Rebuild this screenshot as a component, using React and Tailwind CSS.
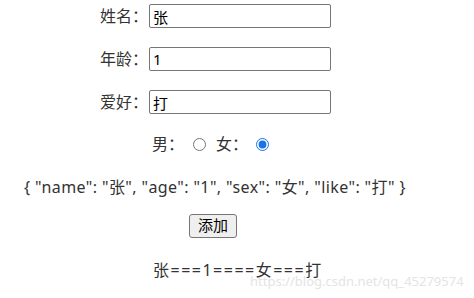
import { useState } from "react";

const font = { fontFamily: '"Noto Sans", "Noto Sans CJK SC", sans-serif' };

function Field({ label, value }) {
  return (
    <div className="flex items-center h-[24px]">
      <span className="w-[52px] text-right text-[16px]">{label}</span>
      <input
        readOnly
        value={value}
        className="ml-[1px] w-[182px] h-[24px] border border-[#767676] rounded-[2px] px-[3px] text-[15px] text-black outline-none"
      />
    </div>
  );
}

export default function App() {
  const [sex] = useState("女");
  return (
    <div className="relative w-[474px] h-[298px] bg-white text-[#333] overflow-hidden" style={font}>
      <div className="flex flex-col pl-[96px] pt-[4px] gap-[19px]">
        <Field label="姓名：" value="张" />
        <Field label="年龄：" value="1" />
        <Field label="爱好：" value="打" />
      </div>
      <div className="flex items-center pl-[152px] mt-[18px] h-[24px] text-[16px]">
        <span>男：</span>
        <input type="radio" name="sex" readOnly checked={sex === "男"} className="w-[13px] h-[13px] ml-[9px] accent-[#1a73e8]" />
        <span className="ml-[10px]">女：</span>
        <input type="radio" name="sex" readOnly checked={sex === "女"} className="w-[13px] h-[13px] ml-[8px] accent-[#1a73e8]" />
      </div>
      <p className="pl-[24px] mt-[19px] h-[24px] leading-[24px] text-[16px] tracking-[0.4px]">
        {'{ "name": "张", "age": "1", "sex": "女", "like": "打" }'}
      </p>
      <div className="pl-[189px] mt-[14px]">
        <button className="w-[48px] h-[24px] bg-[#efefef] border border-[#767676] rounded-[3px] text-[15px] text-black leading-none">
          添加
        </button>
      </div>
      <p className="pl-[153px] mt-[20px] h-[24px] leading-[24px] text-[16px] tracking-[1.5px]">张===1====女===打</p>
      <span className="absolute left-[250px] top-[272px] text-[13px] text-[#e4e4e4] whitespace-nowrap">https://blog.csdn.net/qq_45279574</span>
    </div>
  );
}
